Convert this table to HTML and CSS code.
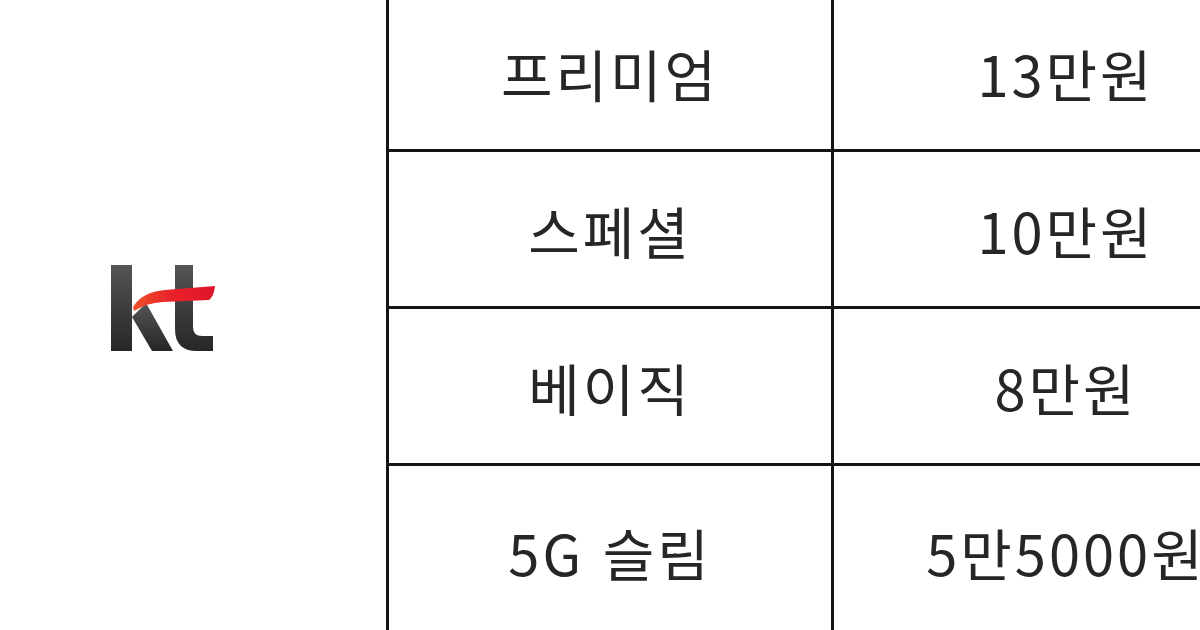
FILE: index.html
```html
<!DOCTYPE html>
<html lang="ko">
<head>
<meta charset="utf-8">
<title>KT 요금제</title>
<link rel="stylesheet" href="styles.css">
</head>
<body>
<div class="page">
  <div class="brand">
    <svg class="kt-logo" width="120" height="100" viewBox="100 260 120 100" aria-label="kt">
      <defs>
        <linearGradient id="gray" x1="0" y1="0" x2="0" y2="1">
          <stop offset="0" stop-color="#555557"/>
          <stop offset="1" stop-color="#262628"/>
        </linearGradient>
        <linearGradient id="red" x1="0" y1="0" x2="1" y2="0">
          <stop offset="0" stop-color="#f0502a"/>
          <stop offset="0.5" stop-color="#e8202a"/>
          <stop offset="1" stop-color="#e0142a"/>
        </linearGradient>
      </defs>
      <rect x="111" y="265" width="21" height="86" fill="url(#gray)"/>
      <path d="M132 317 L146 303 L173 351 L152 351 Z" fill="url(#gray)"/>
      <path d="M175 265 H193 V327 Q193 336 202 336 H213 V351 H197 Q175 351 175 329 Z" fill="url(#gray)"/>
      <path d="M133 307 Q142 292 165 290 L215 286 Q214 296 209 300 L163 302 Q146 303 134 311 Z" fill="url(#red)"/>
    </svg>
  </div>
  <div class="plans">
    <div class="cell name">프리미엄</div>
    <div class="cell price">13만원</div>
    <div class="cell name">스페셜</div>
    <div class="cell price">10만원</div>
    <div class="cell name">베이직</div>
    <div class="cell price">8만원</div>
    <div class="cell name">5G 슬림</div>
    <div class="cell price">5만5000원</div>
  </div>
</div>
</body>
</html>
```

FILE: styles.css
```css
html, body {
  margin: 0;
  padding: 0;
  background: #ffffff;
}

.page {
  width: 1200px;
  height: 630px;
  overflow: hidden;
  display: flex;
  align-items: flex-start;
  background: #ffffff;
}

.brand {
  width: 386px;
  flex: none;
  padding-top: 260px;
  padding-left: 100px;
  box-sizing: border-box;
}

.kt-logo {
  display: block;
}

.plans {
  flex: none;
  margin-top: -8px;
  display: grid;
  grid-template-columns: 445px 467px;
  grid-template-rows: 157px 157px 157px 180px;
  border-top: 3px solid #141414;
  border-left: 3px solid #141414;
}

.cell {
  box-sizing: border-box;
  border-right: 3px solid #141414;
  border-bottom: 3px solid #141414;
  display: flex;
  align-items: center;
  justify-content: center;
  font-family: "Noto Sans CJK KR", "Noto Sans", sans-serif;
  font-size: 56px;
  font-weight: 400;
  letter-spacing: 3px;
  color: #262626;
  white-space: nowrap;
}

.cell:nth-last-child(-n+2) {
  padding-bottom: 6px;
}
```
